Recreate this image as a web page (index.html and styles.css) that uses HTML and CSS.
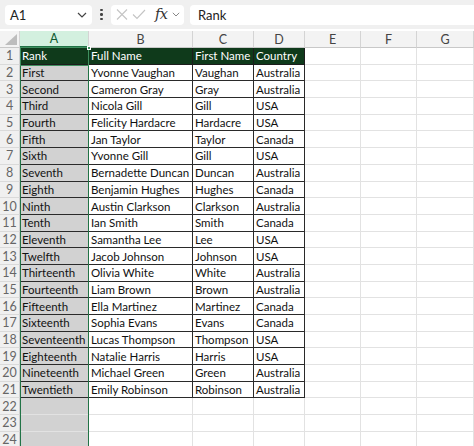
FILE: index.html
```html
<!DOCTYPE html>
<html>
<head>
<meta charset="utf-8">
<link rel="stylesheet" href="styles.css">
</head>
<body>
<div class="toolbar">
  <div class="namebox"><span class="ref">A1</span>
    <svg class="chev" width="10" height="6" viewBox="0 0 10 6"><path d="M1 1 L5 5 L9 1" fill="none" stroke="#444" stroke-width="1.2"/></svg>
  </div>
  <div class="dots"><i></i><i></i><i></i></div>
  <div class="fxbox">
    <svg width="12" height="11" viewBox="0 0 12 11"><path d="M1 0.5 L11 10.5 M11 0.5 L1 10.5" stroke="#c4c4c4" stroke-width="1.1" fill="none"/></svg>
    <svg width="14" height="11" viewBox="0 0 14 11"><path d="M1 5.5 L5 9.5 L13 1" stroke="#c4c4c4" stroke-width="1.1" fill="none"/></svg>
    <span class="fx">fx</span>
    <svg class="chev2" width="8" height="5" viewBox="0 0 8 5"><path d="M0.8 0.8 L4 4 L7.2 0.8" fill="none" stroke="#888" stroke-width="1"/></svg>
  </div>
  <div class="formula">Rank</div>
</div>
<div class="sheetwrap">
<div class="sheet">
  <div class="corner"><svg width="12" height="11" viewBox="0 0 12 11"><path d="M12 0 L12 11 L0 11 Z" fill="#bdbdbd"/></svg></div>
  <div class="ch sel">A</div><div class="ch">B</div><div class="ch">C</div><div class="ch">D</div><div class="ch">E</div><div class="ch">F</div><div class="ch">G</div>

  <div class="rh">1</div><div class="c a h">Rank</div><div class="c d h">Full Name</div><div class="c d h">First Name</div><div class="c d h">Country</div><div class="c"></div><div class="c"></div><div class="c"></div>
  <div class="rh">2</div><div class="c a d">First</div><div class="c d">Yvonne Vaughan</div><div class="c d">Vaughan</div><div class="c d">Australia</div><div class="c"></div><div class="c"></div><div class="c"></div>
  <div class="rh">3</div><div class="c a d">Second</div><div class="c d">Cameron Gray</div><div class="c d">Gray</div><div class="c d">Australia</div><div class="c"></div><div class="c"></div><div class="c"></div>
  <div class="rh">4</div><div class="c a d">Third</div><div class="c d">Nicola Gill</div><div class="c d">Gill</div><div class="c d">USA</div><div class="c"></div><div class="c"></div><div class="c"></div>
  <div class="rh">5</div><div class="c a d">Fourth</div><div class="c d">Felicity Hardacre</div><div class="c d">Hardacre</div><div class="c d">USA</div><div class="c"></div><div class="c"></div><div class="c"></div>
  <div class="rh">6</div><div class="c a d">Fifth</div><div class="c d">Jan Taylor</div><div class="c d">Taylor</div><div class="c d">Canada</div><div class="c"></div><div class="c"></div><div class="c"></div>
  <div class="rh">7</div><div class="c a d">Sixth</div><div class="c d">Yvonne Gill</div><div class="c d">Gill</div><div class="c d">USA</div><div class="c"></div><div class="c"></div><div class="c"></div>
  <div class="rh">8</div><div class="c a d">Seventh</div><div class="c d">Bernadette Duncan</div><div class="c d">Duncan</div><div class="c d">Australia</div><div class="c"></div><div class="c"></div><div class="c"></div>
  <div class="rh">9</div><div class="c a d">Eighth</div><div class="c d">Benjamin Hughes</div><div class="c d">Hughes</div><div class="c d">Canada</div><div class="c"></div><div class="c"></div><div class="c"></div>
  <div class="rh">10</div><div class="c a d">Ninth</div><div class="c d">Austin Clarkson</div><div class="c d">Clarkson</div><div class="c d">Australia</div><div class="c"></div><div class="c"></div><div class="c"></div>
  <div class="rh">11</div><div class="c a d">Tenth</div><div class="c d">Ian Smith</div><div class="c d">Smith</div><div class="c d">Canada</div><div class="c"></div><div class="c"></div><div class="c"></div>
  <div class="rh">12</div><div class="c a d">Eleventh</div><div class="c d">Samantha Lee</div><div class="c d">Lee</div><div class="c d">USA</div><div class="c"></div><div class="c"></div><div class="c"></div>
  <div class="rh">13</div><div class="c a d">Twelfth</div><div class="c d">Jacob Johnson</div><div class="c d">Johnson</div><div class="c d">USA</div><div class="c"></div><div class="c"></div><div class="c"></div>
  <div class="rh">14</div><div class="c a d">Thirteenth</div><div class="c d">Olivia White</div><div class="c d">White</div><div class="c d">Australia</div><div class="c"></div><div class="c"></div><div class="c"></div>
  <div class="rh">15</div><div class="c a d">Fourteenth</div><div class="c d">Liam Brown</div><div class="c d">Brown</div><div class="c d">Australia</div><div class="c"></div><div class="c"></div><div class="c"></div>
  <div class="rh">16</div><div class="c a d">Fifteenth</div><div class="c d">Ella Martinez</div><div class="c d">Martinez</div><div class="c d">Canada</div><div class="c"></div><div class="c"></div><div class="c"></div>
  <div class="rh">17</div><div class="c a d">Sixteenth</div><div class="c d">Sophia Evans</div><div class="c d">Evans</div><div class="c d">Canada</div><div class="c"></div><div class="c"></div><div class="c"></div>
  <div class="rh">18</div><div class="c a d">Seventeenth</div><div class="c d">Lucas Thompson</div><div class="c d">Thompson</div><div class="c d">USA</div><div class="c"></div><div class="c"></div><div class="c"></div>
  <div class="rh">19</div><div class="c a d">Eighteenth</div><div class="c d">Natalie Harris</div><div class="c d">Harris</div><div class="c d">USA</div><div class="c"></div><div class="c"></div><div class="c"></div>
  <div class="rh">20</div><div class="c a d">Nineteenth</div><div class="c d">Michael Green</div><div class="c d">Green</div><div class="c d">Australia</div><div class="c"></div><div class="c"></div><div class="c"></div>
  <div class="rh">21</div><div class="c a d">Twentieth</div><div class="c d">Emily Robinson</div><div class="c d">Robinson</div><div class="c d">Australia</div><div class="c"></div><div class="c"></div><div class="c"></div>
  <div class="rh">22</div><div class="c a"></div><div class="c"></div><div class="c"></div><div class="c"></div><div class="c"></div><div class="c"></div><div class="c"></div>
  <div class="rh">23</div><div class="c a"></div><div class="c"></div><div class="c"></div><div class="c"></div><div class="c"></div><div class="c"></div><div class="c"></div>
  <div class="rh">24</div><div class="c a"></div><div class="c"></div><div class="c"></div><div class="c"></div><div class="c"></div><div class="c"></div><div class="c"></div>
</div>
<div class="selcol"></div>
<div class="active"><span class="handle"></span></div>
</div>
</body>
</html>
```
FILE: styles.css
```css
* { box-sizing: border-box; }
html, body { margin: 0; padding: 0; background: #fff; }
body {
  width: 474px; height: 446px; overflow: hidden;
  font-family: Lato, "Open Sans", "Liberation Sans", sans-serif;
  color: #1a1a1a;
}
.toolbar {
  height: 29px; background: #f0f0f0;
  display: flex; align-items: center;
  padding-left: 5px; gap: 0;
}
.namebox {
  width: 87px; height: 20px; background: #fff; border-radius: 4px;
  display: flex; align-items: center; justify-content: space-between;
  padding: 0 5px 0 5px; font-size: 13px; color: #222;
}
.chev { margin-top: 1px; }
.dots {
  width: 19px; display: flex; flex-direction: column; align-items: center; gap: 2px;
}
.dots i { display: block; width: 2.4px; height: 2.4px; border-radius: 50%; background: #444; }
.fxbox {
  width: 73px; height: 20px; background: #fff; border-radius: 4px;
  display: flex; align-items: center; padding-left: 5px; gap: 4px;
}
.fx {
  font-family: "DejaVu Serif", "Liberation Serif", serif; font-style: italic;
  font-size: 14.5px; color: #333; margin-left: 5px; letter-spacing: -0.5px;
  line-height: 1;
}
.chev2 { margin-left: 0; }
.formula {
  flex: 1; height: 20px; background: #fff; border-radius: 4px 0 0 4px;
  margin-left: 6px; display: flex; align-items: center; padding-left: 8px;
  font-size: 13px; color: #222;
}
.sheetwrap { position: relative; margin-top: 2px; }
.sheet {
  display: grid;
  grid-template-columns: 20px 69px 104px 61px 51px 56px 56px 57px;
  grid-template-rows: 17px repeat(24, 16.7px);
  font-size: 11.5px;
}
.corner {
  background: #f3f3f3; border-right: 1px solid #d4d4d4; border-bottom: 1px solid #c8c8c8;
  display: flex; align-items: flex-end; justify-content: flex-end; padding: 0 2px 2px 0;
}
.ch {
  background: #f3f3f3; color: #444; font-size: 12.5px;
  display: flex; align-items: center; justify-content: center;
  border-right: 1px solid #d4d4d4; border-bottom: 1px solid #c8c8c8;
}
.ch.sel { background: #d3f0df; color: #0f5a2f; border-bottom: 2px solid #217346; }
.rh {
  background: #f0f0f0; color: #666; font-size: 12.5px;
  display: flex; align-items: center; justify-content: center;
  border-right: 1px solid #d0d0d0; border-bottom: 1px solid #dadada;
}
.c {
  border-right: 1px solid #e2e2e2; border-bottom: 1px solid #e2e2e2;
  padding-left: 2px; display: flex; align-items: center;
  white-space: nowrap; overflow: hidden; color: #111;
}
.c.d { border-right-color: #2a2a2a; border-bottom-color: #2a2a2a; }
.c.a { background: #d2d2d2; }
.c.h { background: #0f3a1b; color: #fff; border-right-color: #1c1c1c; border-bottom-color: #1c1c1c; }
.selcol {
  position: absolute; left: 20px; top: 17px; width: 69px; height: 410px;
  border-left: 1.5px solid #217346; border-right: 1.5px solid #217346;
  pointer-events: none;
}
.active {
  position: absolute; left: 20px; top: 16px; width: 69px; height: 18.5px;
  border: 1.5px solid #3f8f5f;
}
.handle {
  position: absolute; right: -3px; top: -2px; width: 4px; height: 4px;
  background: #3f8f5f; border: 1px solid #fff;
}
```
